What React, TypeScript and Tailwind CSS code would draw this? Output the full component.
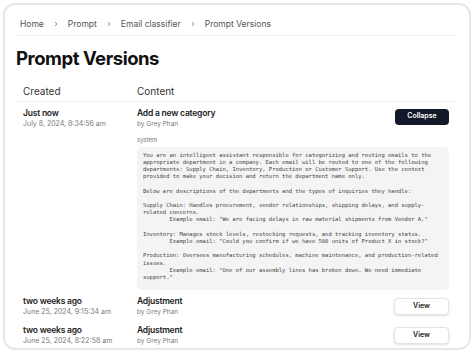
import React from "react";

const font = { fontFamily: "Inter, 'Noto Sans', sans-serif" };

const promptText = `You are an intelligent assistant responsible for categorizing and routing emails to the
appropriate department in a company. Each email will be routed to one of the following
departments: Supply Chain, Inventory, Production or Customer Support. Use the context
provided to make your decision and return the department name only.

Below are descriptions of the departments and the types of inquiries they handle:

Supply Chain: Handles procurement, vendor relationships, shipping delays, and supply-
related concerns.
        Example email: "We are facing delays in raw material shipments from Vendor A."

Inventory: Manages stock levels, restocking requests, and tracking inventory status.
        Example email: "Could you confirm if we have 500 units of Product X in stock?"

Production: Oversees manufacturing schedules, machine maintenance, and production-related
issues.
        Example email: "One of our assembly lines has broken down. We need immediate
support."`;

const Chevron = () => (
  <svg width="6" height="6" viewBox="0 0 6 6" className="text-[#777]">
    <path d="M2 1l2 2-2 2" fill="none" stroke="currentColor" strokeWidth="0.8" />
  </svg>
);

const VersionRow = ({ when, date, title }: { when: string; date: string; title: string }) => (
  <div className="flex px-[7px] py-[4px]">
    <div className="w-[114px] shrink-0">
      <div className="text-[8.5px] font-semibold leading-[11px] tracking-tight text-[#1a1a1a]">{when}</div>
      <div className="text-[7px] leading-[10px] text-[#7a7a7a]">{date}</div>
    </div>
    <div className="flex flex-1 items-center justify-between">
      <div>
        <div className="text-[8.5px] font-semibold leading-[11px] tracking-tight text-[#1a1a1a]">{title}</div>
        <div className="text-[6.5px] leading-[10px] text-[#7a7a7a]">by Grey Phan</div>
      </div>
      <button className="h-[17px] w-[55px] rounded-[4px] border border-[#e4e4e7] bg-white text-[7px] font-semibold text-[#1a1a1a] shadow-sm">
        View
      </button>
    </div>
  </div>
);

export default function App() {
  return (
    <div className="min-h-screen bg-white p-[3px]" style={font}>
      <div className="h-[347px] overflow-hidden rounded-xl border-2 border-[#e5e7eb] bg-white pl-[11px] pr-[13px] pt-[13px]">
        <div className="flex items-center gap-[9px] border-b border-[#f0f0f0] px-[4px] pb-[5px] text-[8.5px] leading-[12px] text-[#555]">
          <span>Home</span>
          <Chevron />
          <span>Prompt</span>
          <Chevron />
          <span>Email classifier</span>
          <Chevron />
          <span>Prompt Versions</span>
        </div>

        <h1 className="mt-[10px] text-[18.5px] font-bold leading-[24px] tracking-tight text-[#111]">Prompt Versions</h1>

        <div className="mt-[14px] flex border-b border-[#f0f0f0] px-[7px] pb-[3px] text-[10px] leading-[14px] text-[#333]">
          <div className="w-[114px] shrink-0">Created</div>
          <div>Content</div>
        </div>

        <div className="flex px-[7px] pt-[6px]">
          <div className="w-[114px] shrink-0">
            <div className="text-[8.5px] font-semibold leading-[11px] tracking-tight text-[#1a1a1a]">Just now</div>
            <div className="text-[7px] leading-[10px] text-[#7a7a7a]">July 8, 2024, 8:34:56 am</div>
          </div>
          <div className="flex-1">
            <div className="flex items-start justify-between">
              <div>
                <div className="text-[8.5px] font-semibold leading-[11px] tracking-tight text-[#1a1a1a]">Add a new category</div>
                <div className="text-[6.5px] leading-[10px] text-[#7a7a7a]">by Grey Phan</div>
              </div>
              <button className="mt-[0.5px] h-[16px] w-[54px] rounded-[4px] bg-[#111827] text-[7px] font-semibold text-white">
                Collapse
              </button>
            </div>
            <div className="mt-[6px] text-[6px] leading-[9px] text-[#7a7a7a]">system</div>
            <pre
              className="mt-[3px] w-[312px] whitespace-pre rounded-[5px] bg-[#f4f4f5] px-[6px] pb-[9px] pt-[4.5px] text-[5.5px] leading-[7.2px] text-[#444]"
              style={{ fontFamily: "'DejaVu Sans Mono', 'Liberation Mono', monospace" }}
            >
              {promptText}
            </pre>
          </div>
        </div>

        <div className="mt-[1.5px]">
          <VersionRow when="two weeks ago" date="June 25, 2024, 9:15:34 am" title="Adjustment" />
          <VersionRow when="two weeks ago" date="June 25, 2024, 8:22:58 am" title="Adjustment" />
        </div>
      </div>
    </div>
  );
}
